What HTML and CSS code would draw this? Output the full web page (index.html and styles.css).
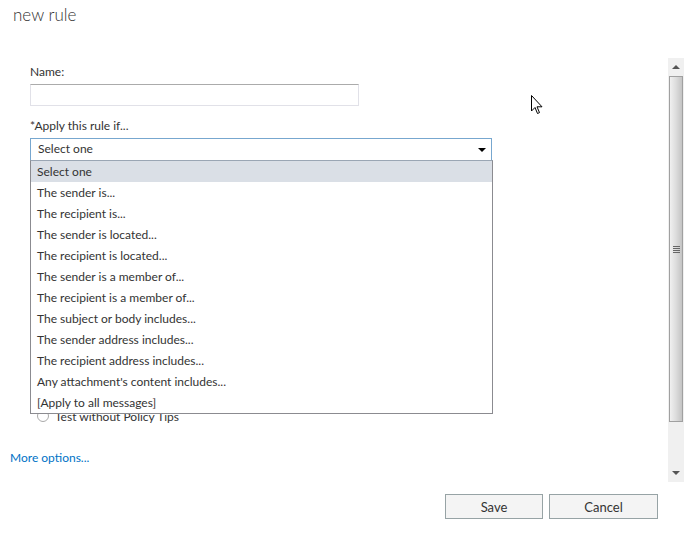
FILE: index.html
```
<html>
<head>
	<meta http-equiv="content-type" content="text/html;charset=utf-8">
	<title>new rule</title>
	<link rel="stylesheet" href="styles.css">
</head>
<body>
	<div class="dialog">
		<h1 class="title">new rule</h1>

		<div class="body">
			<div class="content">
				<div class="form">
					<label class="lbl">Name:</label>
					<input class="txt" type="text">

					<label class="lbl">*Apply this rule if...</label>
					<div class="combo">
						<div class="select">Select one <span class="caret"></span></div>
						<ul class="options">
							<li class="on">Select one</li>
							<li>The sender is...</li>
							<li>The recipient is...</li>
							<li>The sender is located...</li>
							<li>The recipient is located...</li>
							<li>The sender is a member of...</li>
							<li>The recipient is a member of...</li>
							<li>The subject or body includes...</li>
							<li>The sender address includes...</li>
							<li>The recipient address includes...</li>
							<li>Any attachment's content includes...</li>
							<li>[Apply to all messages]</li>
						</ul>
					</div>

					<div class="radios">
						<div class="radio"><span class="dot"></span>Test without Policy Tips</div>
					</div>
				</div>
				<a class="more" href="#">More options...</a>
			</div>

			<div class="scrollbar">
				<div class="sb-btn"><span class="up"></span></div>
				<div class="thumb"><span class="grip"></span></div>
				<div class="track"></div>
				<div class="sb-btn"><span class="down"></span></div>
			</div>
		</div>

		<div class="footer">
			<button class="btn save">Save</button>
			<button class="btn cancel">Cancel</button>
		</div>

		<!-- mouse pointer -->
		<svg class="cursor" width="13" height="20" viewBox="0 0 13 20">
			<path d="M0.5 0.5 L0.5 16 L4 12.5 L6.5 18.5 L8.5 17.6 L6 11.8 L11 11.8 Z" fill="#fff" stroke="#000" stroke-width="1"/>
		</svg>
	</div>
</body>
</html>
```

FILE: styles.css
```
body{
	margin:0;
	padding:0;
	background:#fff;
	font-family:"Segoe UI", Lato, "Noto Sans", sans-serif;
	font-size:12px;
	color:#333;
}

.dialog{
	width:685px;
	height:545px;
	position:relative;
	overflow:hidden;
}

.title{
	margin:0;
	padding:4px 0 0 13px;
	height:58px;
	box-sizing:border-box;
	font-size:17px;
	font-weight:300;
	color:#333;
}

.body{
	display:flex;
	height:424px;
}
.content{
	flex:1;
	overflow:hidden;
}
.form{
	padding:6px 0 0 30px;
}

.lbl{
	display:block;
	line-height:16px;
	height:16px;
	margin-bottom:4px;
}

.txt{
	display:block;
	width:329px;
	height:22px;
	box-sizing:border-box;
	border:1px solid #e1e1e8;
	border-top-color:#ababab;
	margin:0 0 12px;
	outline:none;
}

.combo{
	position:relative;
}
.select{
	position:relative;
	width:462px;
	height:23px;
	box-sizing:border-box;
	border:1px solid #77a7cf;
	padding-left:7px;
	line-height:20px;
}
.caret{
	position:absolute;
	right:5px;
	top:9px;
	border-left:4px solid transparent;
	border-right:4px solid transparent;
	border-top:4px solid #000;
}

.options{
	position:absolute;
	top:22px;
	left:0;
	width:463px;
	margin:0;
	padding:0;
	list-style:none;
	background:#fff;
	border:1px solid #8b8b90;
	border-top:1px solid #9aa6b4;
	box-sizing:border-box;
	z-index:2;
}
.options li{
	height:21px;
	line-height:21px;
	padding-left:6px;
}
.options li.on{
	background:#dadfe6;
}

.btn{
	background:#f4f4f4;
	border:1px solid #97a3a5;
	font-family:inherit;
	font-size:13px;
	color:#333;
	padding:0;
}

.radios{
	margin-top:245px;
}
.radio{
	display:flex;
	align-items:center;
	height:20px;
	padding-left:7px;
}
.dot{
	width:10px;
	height:10px;
	border:1px solid #aaa;
	border-radius:50%;
	margin-right:6px;
}

.more{
	display:block;
	margin:24px 0 0 10px;
	line-height:16px;
	color:#0072c6;
	text-decoration:none;
}

.scrollbar{
	width:16px;
	background:#f0f0f0;
	display:flex;
	flex-direction:column;
	margin-right:1px;
}
.sb-btn{
	height:18px;
	display:flex;
	align-items:center;
	justify-content:center;
}
.up{
	border-left:4px solid transparent;
	border-right:4px solid transparent;
	border-bottom:4px solid #555;
}
.down{
	border-left:4px solid transparent;
	border-right:4px solid transparent;
	border-top:4px solid #555;
}
.thumb{
	height:346px;
	margin:0 1px;
	box-sizing:border-box;
	border:1px solid #a0a0a0;
	background:linear-gradient(to right, #f0f0f0, #dcdcdc 50%, #c4c4c4);
	display:flex;
	align-items:center;
	justify-content:center;
}
.grip{
	width:7px;
	height:7px;
	background:repeating-linear-gradient(to bottom, #666 0, #666 1px, transparent 1px, transparent 2px);
}
.track{
	flex:1;
}

.footer{
	display:flex;
	justify-content:flex-end;
	gap:6px;
	padding:12px 27px 0 0;
}
.save{
	width:98px;
	height:25px;
}
.cancel{
	width:109px;
	height:25px;
}

.cursor{
	position:absolute;
	left:531px;
	top:95px;
}
```
